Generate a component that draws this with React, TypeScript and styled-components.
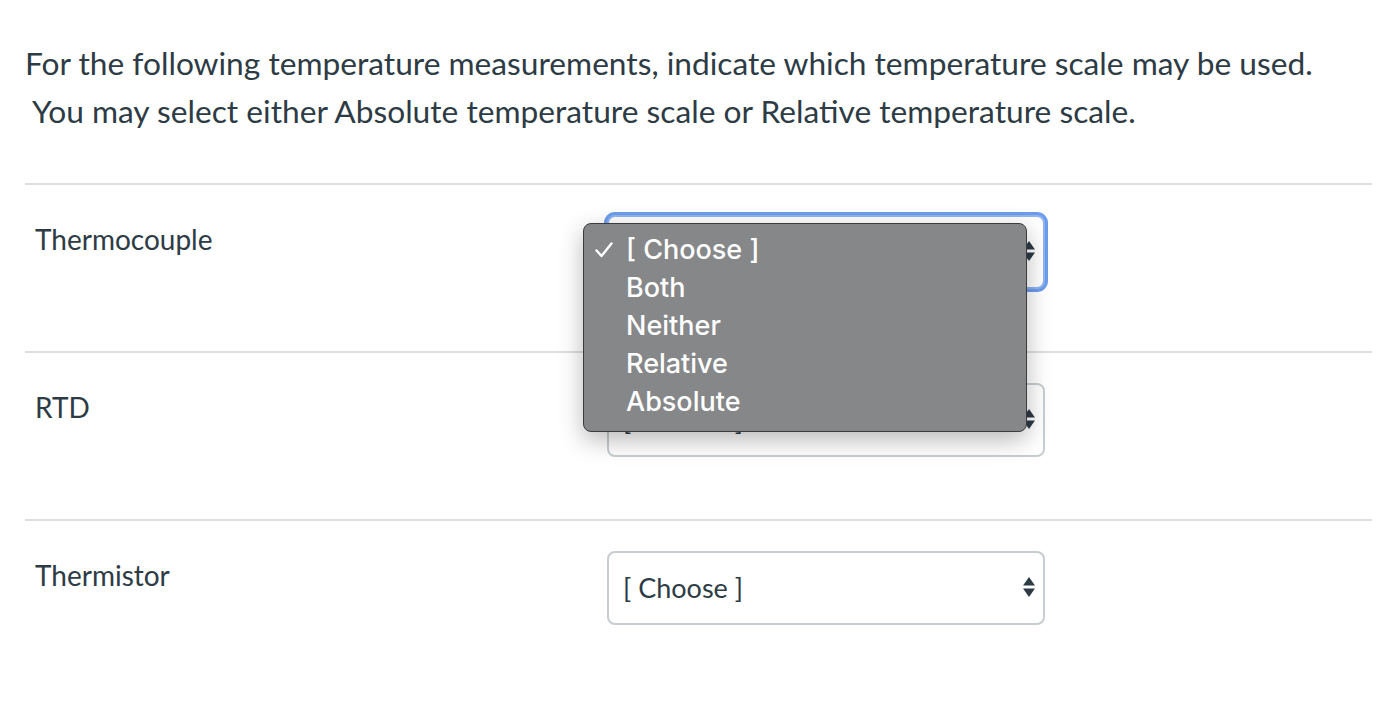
import styled, { createGlobalStyle } from "styled-components";

const GlobalStyle = createGlobalStyle`
  html, body {
    margin: 0;
    background: #ffffff;
    font-family: Lato, "Open Sans", sans-serif;
    color: #2d3b45;
  }
`;

const Page = styled.div`
  padding: 39px 26px 0 25px;
`;

const Prompt = styled.p`
  margin: 0 0 48px 0;
  font-size: 31.7px;
  line-height: 48px;
  white-space: nowrap;
`;

const Row = styled.div`
  display: grid;
  grid-template-columns: 572px 438px;
  height: 166px;
  padding-left: 10px;
  border-top: 2px solid #dedede;
`;

const Label = styled.div`
  padding-top: 38px;
  font-size: 28px;
  line-height: 32px;
`;

const SelectWrap = styled.div`
  position: relative;
  margin-top: 30px;
  height: 74px;
`;

const SelectBox = styled.div<{ $focused?: boolean }>`
  box-sizing: border-box;
  height: 74px;
  display: flex;
  align-items: center;
  justify-content: space-between;
  padding: 0 7px 2px 14px;
  border: 2px solid #c7cdd1;
  border-radius: 8px;
  background: #fff;
  font-size: 27px;
  box-shadow: ${(p) => (p.$focused ? "0 0 0 3px #6c9ceb" : "none")};
  border-color: ${(p) => (p.$focused ? "#8fb4f0" : "#c7cdd1")};
`;

const Menu = styled.ul`
  position: absolute;
  left: -24px;
  top: 8px;
  width: 444px;
  box-sizing: border-box;
  margin: 0;
  padding: 7px 0 10px 0;
  list-style: none;
  background: #868789;
  border: 1px solid #3c3c3e;
  border-radius: 8px;
  box-shadow: 0 8px 24px rgba(0, 0, 0, 0.28);
  font-family: Inter, "Liberation Sans", sans-serif;
  font-weight: 500;
  font-size: 27px;
  color: #fff;
  z-index: 5;
`;

const Option = styled.li`
  position: relative;
  height: 38px;
  line-height: 38px;
  padding-left: 42px;
`;

const Check = styled.svg`
  position: absolute;
  left: 11px;
  top: 11px;
`;

const Arrows = () => (
  <svg width="14" height="24" viewBox="0 0 14 24">
    <path d="M7 2 L13 10.5 L1 10.5 Z" fill="#2d3b45" />
    <path d="M1 13.5 L13 13.5 L7 22 Z" fill="#2d3b45" />
  </svg>
);

const options = ["[ Choose ]", "Both", "Neither", "Relative", "Absolute"];

const rows = ["Thermocouple", "RTD", "Thermistor"];

export default function App() {
  return (
    <>
      <GlobalStyle />
      <Page>
        <Prompt>
          For the following temperature measurements, indicate which temperature scale may be used.
          <br />
          &nbsp;You may select either Absolute temperature scale or Relative temperature scale.
        </Prompt>
        {rows.map((name, i) => (
          <Row key={name}>
            <Label>{name}</Label>
            <SelectWrap>
              <SelectBox $focused={i === 0}>
                <span>[ Choose ]</span>
                <Arrows />
              </SelectBox>
              {i === 0 && (
                <Menu>
                  {options.map((o, j) => (
                    <Option key={o}>
                      {j === 0 && (
                        <Check width="18" height="16" viewBox="0 0 18 16">
                          <path
                            d="M1.5 8.5 L6.5 14 L16.5 1.5"
                            fill="none"
                            stroke="#fff"
                            strokeWidth="2.4"
                            strokeLinecap="round"
                            strokeLinejoin="round"
                          />
                        </Check>
                      )}
                      {o}
                    </Option>
                  ))}
                </Menu>
              )}
            </SelectWrap>
          </Row>
        ))}
      </Page>
    </>
  );
}
